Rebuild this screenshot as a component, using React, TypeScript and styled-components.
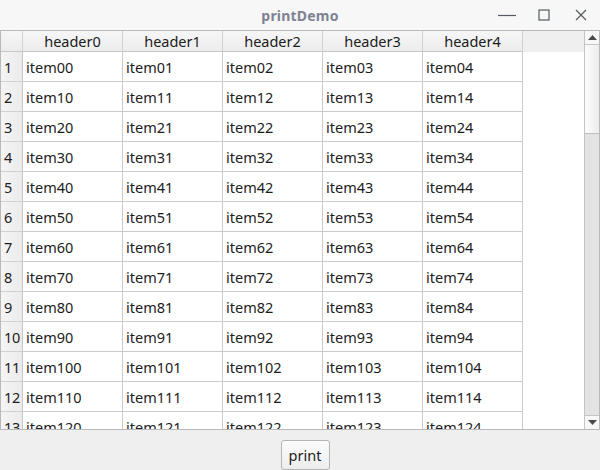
import React from "react";
import styled, { createGlobalStyle } from "styled-components";

const COLS = 5;
const ROWS = 13;

const GlobalStyle = createGlobalStyle`
  html, body {
    margin: 0;
    padding: 0;
    width: 600px;
    height: 470px;
    overflow: hidden;
    background: #efefef;
  }
  * {
    box-sizing: border-box;
  }
`;

const Window = styled.div`
  width: 600px;
  height: 470px;
  display: flex;
  flex-direction: column;
  font-family: "Noto Sans", "DejaVu Sans", sans-serif;
  font-size: 14.5px;
  color: #1c1c1c;
  background: #efefef;
`;

const TitleBar = styled.div`
  height: 30px;
  flex: none;
  position: relative;
  display: flex;
  align-items: center;
  justify-content: center;
  background: #f7f7f7;
`;

const Title = styled.span`
  font-weight: bold;
  font-size: 14px;
  color: #7d8392;
  letter-spacing: 0.2px;
`;

const Controls = styled.div`
  position: absolute;
  right: 9px;
  top: 0;
  height: 30px;
  display: flex;
  align-items: center;
  gap: 17px;
`;

const ControlButton = styled.div`
  width: 20px;
  height: 20px;
  display: flex;
  align-items: center;
  justify-content: center;
`;

const TableView = styled.div`
  height: 400px;
  flex: none;
  display: flex;
  border: 1px solid #b9b9b9;
  background: #ffffff;
  overflow: hidden;
`;

const GridArea = styled.div`
  flex: 1;
  display: flex;
  flex-direction: column;
  overflow: hidden;
`;

const HeaderStrip = styled.div`
  display: flex;
  height: 21px;
  flex: none;
  background: linear-gradient(#f6f6f6, #ececec);
`;

const Corner = styled.div`
  width: 22px;
  flex: none;
  border-bottom: 1px solid #c6c6c6;
  border-right: 1px solid #d2d2d2;
  background: linear-gradient(#f6f6f6, #ececec);
`;

const ColumnHeader = styled.div`
  width: 100px;
  flex: none;
  display: flex;
  align-items: center;
  justify-content: center;
  border-right: 1px solid #d0d0d0;
  border-bottom: 1px solid #c6c6c6;
  line-height: 1;
  padding-top: 1px;
`;

const HeaderFill = styled.div`
  flex: 1;
  background: #efefef;
`;

const Row = styled.div`
  display: flex;
  height: 30px;
  flex: none;
`;

const RowHeader = styled.div`
  width: 22px;
  flex: none;
  display: flex;
  align-items: center;
  padding-left: 3px;
  border-right: 1px solid #c6c6c6;
  border-bottom: 1px solid #d0d0d0;
  background: linear-gradient(90deg, #f5f5f5, #ebebeb);
  letter-spacing: -0.4px;
`;

const Cell = styled.div`
  width: 100px;
  flex: none;
  display: flex;
  align-items: center;
  padding-left: 3px;
  border-right: 1px solid #cbcbcb;
  border-bottom: 1px solid #cbcbcb;
  white-space: nowrap;
`;

const ScrollBar = styled.div`
  width: 15px;
  flex: none;
  display: flex;
  flex-direction: column;
  border-left: 1px solid #c4c4c4;
  background: #e2e2e2;
`;

const ArrowButton = styled.div<{ $down?: boolean }>`
  height: 14px;
  flex: none;
  display: flex;
  align-items: center;
  justify-content: center;
  background: #f7f7f7;
  border-top: ${(p) => (p.$down ? "1px solid #c6c6c6" : "none")};
  border-bottom: ${(p) => (p.$down ? "none" : "1px solid #c6c6c6")};
`;

const Slider = styled.div`
  height: 89px;
  flex: none;
  background: linear-gradient(90deg, #fcfcfc, #ececec);
  border-bottom: 1px solid #bdbdbd;
`;

const Trough = styled.div`
  flex: 1;
  background: #e3e3e3;
`;

const BottomBar = styled.div`
  flex: 1;
  display: flex;
  justify-content: center;
  padding: 10px 0 0 10px;
  background: #efefef;
`;

const PrintButton = styled.button`
  width: 49px;
  height: 30px;
  padding: 0 0 1px;
  border: 1px solid #b4b4b4;
  border-radius: 3px;
  background: linear-gradient(#fbfbfb, #ededed);
  font-family: "Noto Sans", "DejaVu Sans", sans-serif;
  font-size: 14.5px;
  color: #1c1c1c;
`;

const Arrow: React.FC<{ down?: boolean }> = ({ down }) => (
  <svg width="9" height="5" viewBox="0 0 9 5">
    <polygon points={down ? "0,0 9,0 4.5,5" : "0,5 9,5 4.5,0"} fill="#4a4a4a" />
  </svg>
);

const App: React.FC = () => {
  const cols = Array.from({ length: COLS }, (_, i) => i);
  const rows = Array.from({ length: ROWS }, (_, i) => i);
  return (
    <>
      <GlobalStyle />
      <Window>
        <TitleBar>
          <Title>printDemo</Title>
          <Controls>
            <ControlButton>
              <svg width="20" height="20" viewBox="0 0 20 20">
                <line x1="1" y1="10.5" x2="19" y2="10.5" stroke="#555a63" strokeWidth="1.2" />
              </svg>
            </ControlButton>
            <ControlButton>
              <svg width="20" height="20" viewBox="0 0 20 20">
                <rect x="5" y="5" width="10" height="10" fill="none" stroke="#555a63" strokeWidth="1.2" />
              </svg>
            </ControlButton>
            <ControlButton>
              <svg width="20" height="20" viewBox="0 0 20 20">
                <path d="M5 5 L15 15 M15 5 L5 15" stroke="#555a63" strokeWidth="1.2" />
              </svg>
            </ControlButton>
          </Controls>
        </TitleBar>
        <TableView>
          <GridArea>
            <HeaderStrip>
              <Corner />
              {cols.map((c) => (
                <ColumnHeader key={c}>header{c}</ColumnHeader>
              ))}
              <HeaderFill />
            </HeaderStrip>
            {rows.map((r) => (
              <Row key={r}>
                <RowHeader>{r + 1}</RowHeader>
                {cols.map((c) => (
                  <Cell key={c}>
                    item{r}
                    {c}
                  </Cell>
                ))}
              </Row>
            ))}
          </GridArea>
          <ScrollBar>
            <ArrowButton>
              <Arrow />
            </ArrowButton>
            <Slider />
            <Trough />
            <ArrowButton $down>
              <Arrow down />
            </ArrowButton>
          </ScrollBar>
        </TableView>
        <BottomBar>
          <PrintButton>print</PrintButton>
        </BottomBar>
      </Window>
    </>
  );
};

export default App;
